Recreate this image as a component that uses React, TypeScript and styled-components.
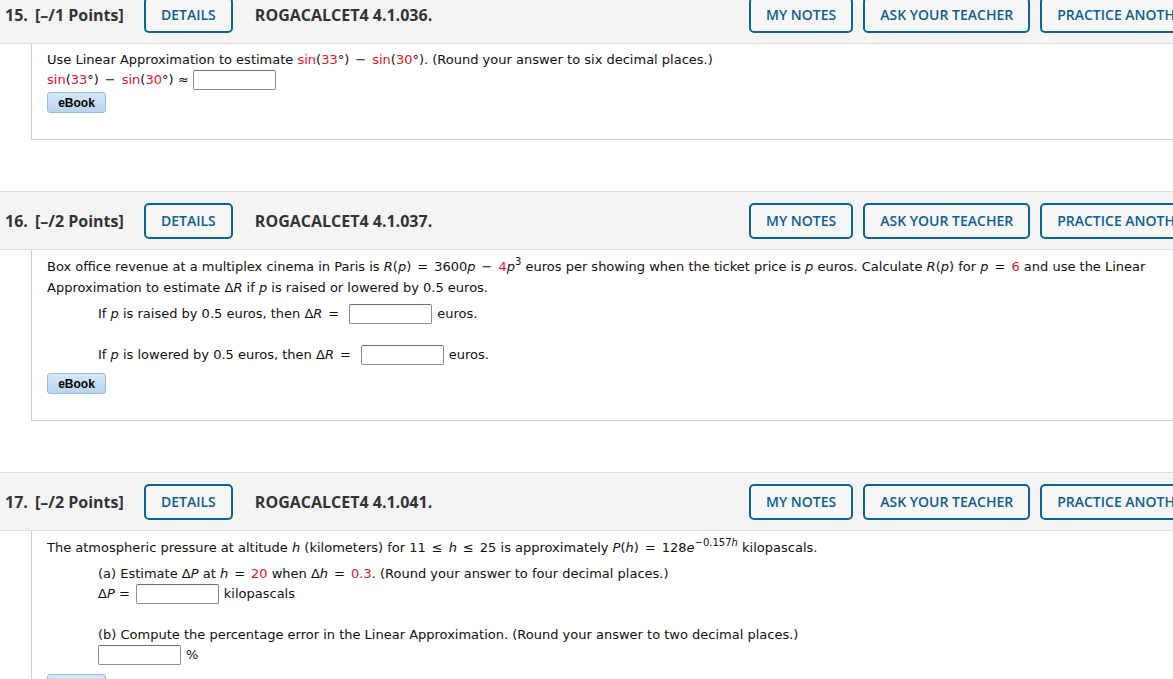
import React from "react";
import styled, { createGlobalStyle } from "styled-components";

const Global = createGlobalStyle`
  html, body { margin: 0; padding: 0; background: #fff; overflow: hidden; }
  body { font-family: "DejaVu Sans", Verdana, sans-serif; }
`;

const Page = styled.div`
  width: 1260px;
  margin-top: -15px;
`;

const Question = styled.section`
  margin-bottom: 51px;
`;

const Header = styled.div`
  display: flex;
  align-items: center;
  height: 57px;
  background: #f4f4f4;
  border-top: 1px solid #dcdcdc;
  border-bottom: 1px solid #dcdcdc;
  font-family: "Open Sans", sans-serif;
  color: #333;
`;

const LeftGroup = styled.div`
  flex: 0 0 749px;
  display: flex;
  align-items: center;
`;

const Num = styled.span`
  font-weight: 700;
  font-size: 16px;
  margin-left: 5px;
  width: 30px;
`;

const Points = styled.span`
  font-weight: 700;
  font-size: 16px;
  width: 109px;
`;

const Title = styled.span`
  font-weight: 700;
  font-size: 16px;
  margin-left: 22px;
`;

const HButton = styled.button`
  box-sizing: border-box;
  height: 36px;
  padding: 0 15px;
  border: 2px solid #0b6399;
  border-radius: 5px;
  background: #f7f7f7;
  color: #0d5f93;
  font-family: "Open Sans", sans-serif;
  font-weight: 600;
  font-size: 14px;
  white-space: nowrap;
`;

const RightGroup = styled.div`
  display: flex;
  align-items: center;
  gap: 10px;
`;

const Content = styled.div`
  margin-left: 31px;
  border-left: 1px solid #cfcfcf;
  border-bottom: 1px solid #cfcfcf;
  padding: 6px 0 26px 15px;
  font-size: 13px;
  color: #111;
`;

const Line = styled.div<{ $lh?: number; $mt?: number; $indent?: boolean }>`
  line-height: ${(p) => p.$lh ?? 20}px;
  margin-top: ${(p) => p.$mt ?? 0}px;
  padding-left: ${(p) => (p.$indent ? 51 : 0)}px;
  white-space: nowrap;
`;

const Para = styled.div<{ $mt?: number }>`
  line-height: 21px;
  margin-top: ${(p) => p.$mt ?? 0}px;
  width: 1110px;
`;

const Red = styled.span`
  color: #e8121f;
`;

const I = styled.i`
  font-style: italic;
`;

const Sup = styled.sup`
  font-size: 10px;
  line-height: 0;
  vertical-align: 6px;
`;

const Answer = styled.span<{ $ml?: number }>`
  display: inline-block;
  vertical-align: top;
  box-sizing: border-box;
  width: 83px;
  height: 20px;
  border: 1px solid #8c8c8c;
  border-top-color: #6e6e6e;
  border-radius: 2px;
  background: #fff;
  margin: 0 5px 0 ${(p) => p.$ml ?? 4}px;
`;

const EBook = styled.button<{ $mt?: number }>`
  display: block;
  box-sizing: border-box;
  width: 59px;
  height: 21px;
  margin-top: ${(p) => p.$mt ?? 2}px;
  padding: 0;
  border: 1px solid #97bbdf;
  border-radius: 3px;
  background: linear-gradient(#d6e7f8, #b9d5f0);
  font-family: "Liberation Sans", Arial, sans-serif;
  font-weight: 700;
  font-size: 12px;
  color: #000;
`;

const Op = styled.span`
  margin: 0 6px;
`;

function QHeader({ n, pts, code }: { n: number; pts: number; code: string }) {
  return (
    <Header>
      <LeftGroup>
        <Num>{n}.</Num>
        <Points>[–/{pts} Points]</Points>
        <HButton>DETAILS</HButton>
        <Title>ROGACALCET4 {code}.</Title>
      </LeftGroup>
      <RightGroup>
        <HButton>MY NOTES</HButton>
        <HButton>ASK YOUR TEACHER</HButton>
        <HButton>PRACTICE ANOTHER</HButton>
      </RightGroup>
    </Header>
  );
}

export default function App() {
  return (
    <Page>
      <Global />
      <Question>
        <QHeader n={15} pts={1} code="4.1.036" />
        <Content>
          <Line>
            Use Linear Approximation to estimate <Red>sin</Red>(<Red>33</Red>°)<Op>−</Op>
            <Red>sin</Red>(<Red>30</Red>°). (Round your answer to six decimal places.)
          </Line>
          <Line>
            <Red>sin</Red>(<Red>33</Red>°)<Op>−</Op><Red>sin</Red>(<Red>30</Red>°) ≈
            <Answer />
          </Line>
          <EBook>eBook</EBook>
        </Content>
      </Question>

      <Question>
        <QHeader n={16} pts={2} code="4.1.037" />
        <Content>
          <Para>
            Box office revenue at a multiplex cinema in Paris is <I>R</I>(<I>p</I>)<Op>=</Op>3600<I>p</I>
            <Op>−</Op>
            <Red>4</Red>
            <I>p</I>
            <Sup>3</Sup> euros per showing when the ticket price is <I>p</I> euros. Calculate <I>R</I>(
            <I>p</I>) for <I>p</I>
            <Op>=</Op>
            <Red>6</Red> and use the Linear Approximation to estimate Δ<I>R</I> if <I>p</I> is raised or lowered by 0.5 euros.
          </Para>
          <Line $indent $mt={6}>
            If <I>p</I> is raised by 0.5 euros, then Δ<I>R</I>
            <Op>=</Op>
            <Answer $ml={4} />
            euros.
          </Line>
          <Line $indent $mt={21}>
            If <I>p</I> is lowered by 0.5 euros, then Δ<I>R</I>
            <Op>=</Op>
            <Answer $ml={4} />
            euros.
          </Line>
          <EBook $mt={8}>eBook</EBook>
        </Content>
      </Question>

      <Question>
        <QHeader n={17} pts={2} code="4.1.041" />
        <Content>
          <Line $lh={22}>
            The atmospheric pressure at altitude <I>h</I> (kilometers) for 11<Op>≤</Op>
            <I>h</I>
            <Op>≤</Op>25 is approximately <I>P</I>(<I>h</I>)<Op>=</Op>128<I>e</I>
            <Sup>
              −0.157<I>h</I>
            </Sup>{" "}
            kilopascals.
          </Line>
          <Line $indent $mt={5}>
            (a) Estimate Δ<I>P</I> at <I>h</I>
            <Op>=</Op>
            <Red>20</Red> when Δ<I>h</I>
            <Op>=</Op>
            <Red>0.3</Red>. (Round your answer to four decimal places.)
          </Line>
          <Line $indent>
            Δ<I>P</I> =
            <Answer $ml={6} />
            kilopascals
          </Line>
          <Line $indent $mt={21}>
            (b) Compute the percentage error in the Linear Approximation. (Round your answer to two decimal places.)
          </Line>
          <Line $indent>
            <Answer $ml={0} />%
          </Line>
          <EBook $mt={9}>eBook</EBook>
        </Content>
      </Question>
    </Page>
  );
}
